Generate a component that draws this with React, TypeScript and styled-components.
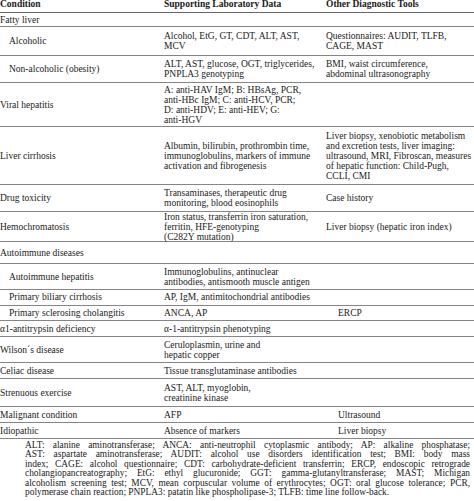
import React from 'react'
import styled, { createGlobalStyle } from 'styled-components'

const GlobalStyle = createGlobalStyle`
  html, body {
    margin: 0;
    padding: 0;
    background: #ffffff;
  }
  body {
    font-family: 'Liberation Serif', 'Times New Roman', serif;
    color: #1a1a1a;
  }
`

const Page = styled.div`
  width: 474px;
  height: 501px;
  overflow: hidden;
  background: #ffffff;
`

const Table = styled.div`
  display: flex;
  flex-direction: column;
`

const Row = styled.div<{ h: number; header?: boolean }>`
  display: grid;
  grid-template-columns: 164px 162px 1fr;
  align-items: ${props => (props.header ? 'start' : 'center')};
  box-sizing: border-box;
  height: ${props => props.h}px;
  border-bottom: 1px solid ${props => (props.header ? '#666666' : '#858585')};
  font-size: 9.5px;
  line-height: ${props => (props.header ? '9px' : '10px')};
  font-weight: ${props => (props.header ? 700 : 400)};
`

const Cell = styled.div<{ indent?: boolean; centered?: boolean }>`
  padding-left: ${props => (props.indent ? '9px' : props.centered ? '12px' : '0')};
  white-space: nowrap;
`

const Line = styled.div``

const Footnote = styled.div`
  padding: 2px 4px 0 25px;
  font-size: 9.4px;
  line-height: 9.4px;
  color: #1a1a1a;
`

const FootLine = styled.div<{ last?: boolean }>`
  white-space: nowrap;
  text-align: justify;
  text-align-last: ${props => (props.last ? 'left' : 'justify')};
`

type Entry = {
  condition: string
  lab?: string[]
  other?: string[]
  h: number
  indent?: boolean
  centered?: boolean
}

const rows: Entry[] = [
  { condition: 'Fatty liver', h: 14 },
  {
    condition: 'Alcoholic',
    indent: true,
    lab: ['Alcohol, EtG, GT, CDT, ALT, AST,', 'MCV'],
    other: ['Questionnaires: AUDIT, TLFB,', 'CAGE, MAST'],
    h: 29,
  },
  {
    condition: 'Non-alcoholic (obesity)',
    indent: true,
    lab: ['ALT, AST, glucose, OGT, triglycerides,', 'PNPLA3 genotyping'],
    other: ['BMI, waist circumference,', 'abdominal ultrasonography'],
    h: 27,
  },
  {
    condition: 'Viral hepatitis',
    lab: ['A: anti-HAV IgM; B: HBsAg, PCR,', 'anti-HBc IgM; C: anti-HCV, PCR;', 'D: anti-HDV; E: anti-HEV; G:', 'anti-HGV'],
    h: 44,
  },
  {
    condition: 'Liver cirrhosis',
    lab: ['Albumin, bilirubin, prothrombin time,', 'immunoglobulins, markers of immune', 'activation and fibrogenesis'],
    other: [
      'Liver biopsy, xenobiotic metabolism',
      'and excretion tests, liver imaging:',
      'ultrasound, MRI, Fibroscan, measures',
      'of hepatic function: Child-Pugh,',
      'CCLI, CMI',
    ],
    h: 58,
  },
  {
    condition: 'Drug toxicity',
    lab: ['Transaminases, therapeutic drug', 'monitoring, blood eosinophils'],
    other: ['Case history'],
    h: 27,
  },
  {
    condition: 'Hemochromatosis',
    lab: ['Iron status, transferrin iron saturation,', 'ferritin, HFE-genotyping', '(C282Y mutation)'],
    other: ['Liver biopsy (hepatic iron index)'],
    h: 30,
  },
  { condition: 'Autoimmune diseases', h: 22 },
  {
    condition: 'Autoimmune hepatitis',
    indent: true,
    lab: ['Immunoglobulins, antinuclear', 'antibodies, antismooth muscle antigen'],
    h: 26,
  },
  {
    condition: 'Primary biliary cirrhosis',
    indent: true,
    lab: ['AP, IgM, antimitochondrial antibodies'],
    h: 15.5,
  },
  {
    condition: 'Primary sclerosing cholangitis',
    indent: true,
    lab: ['ANCA, AP'],
    other: ['ERCP'],
    centered: true,
    h: 15.5,
  },
  { condition: 'α1-antitrypsin deficiency', lab: ['α-1-antitrypsin phenotyping'], h: 16 },
  { condition: 'Wilson´s disease', lab: ['Ceruloplasmin, urine and', 'hepatic copper'], h: 26 },
  { condition: 'Celiac disease', lab: ['Tissue transglutaminase antibodies'], h: 16 },
  { condition: 'Strenuous exercise', lab: ['AST, ALT, myoglobin,', 'creatinine kinase'], h: 28 },
  { condition: 'Malignant condition', lab: ['AFP'], other: ['Ultrasound'], centered: true, h: 16 },
  { condition: 'Idiopathic', lab: ['Absence of markers'], other: ['Liver biopsy'], centered: true, h: 16 },
]

const footnote = [
  'ALT: alanine aminotransferase; ANCA: anti-neutrophil cytoplasmic antibody; AP: alkaline phosphatase;',
  'AST: aspartate aminotransferase; AUDIT: alcohol use disorders identification test; BMI: body mass',
  'index; CAGE: alcohol questionnaire; CDT: carbohydrate-deficient transferrin; ERCP, endoscopic retrograde',
  'cholangiopancreatography; EtG: ethyl glucuronide; GGT: gamma-glutanyltransferase; MAST; Michigan',
  'alcoholism screening test; MCV, mean corpuscular volume of erythrocytes; OGT: oral glucose tolerance; PCR,',
  'polymerase chain reaction; PNPLA3: patatin like phospholipase-3; TLFB: time line follow-back.',
]

const Lines: React.FC<{ items?: string[] }> = ({ items }) => (
  <>
    {(items || []).map((t, i) => (
      <Line key={i}>{t}</Line>
    ))}
  </>
)

export default function App() {
  return (
    <Page>
      <GlobalStyle />
      <Table>
        <Row h={13} header>
          <Cell>Condition</Cell>
          <Cell>Supporting Laboratory Data</Cell>
          <Cell>Other Diagnostic Tools</Cell>
        </Row>
        {rows.map(r => (
          <Row key={r.condition} h={r.h}>
            <Cell indent={r.indent}>{r.condition}</Cell>
            <Cell>
              <Lines items={r.lab} />
            </Cell>
            <Cell centered={r.centered}>
              <Lines items={r.other} />
            </Cell>
          </Row>
        ))}
      </Table>
      <Footnote>
        {footnote.map((t, i) => (
          <FootLine key={i} last={i === footnote.length - 1}>
            {t}
          </FootLine>
        ))}
      </Footnote>
    </Page>
  )
}
